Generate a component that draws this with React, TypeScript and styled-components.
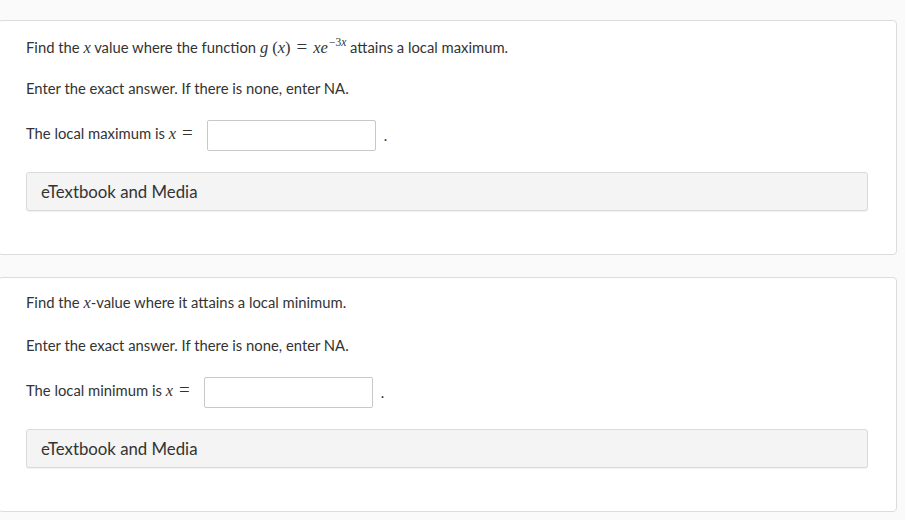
import styled, { createGlobalStyle } from "styled-components";

const Global = createGlobalStyle`
  html, body {
    margin: 0;
    padding: 0;
    background: #fafafa;
  }
  body {
    font-family: Lato, "Open Sans", sans-serif;
    color: #333;
  }
`;

const Page = styled.div`
  display: flex;
  flex-direction: column;
  gap: 22px;
  padding: 20px 8px 0 0;
`;

const Card = styled.section`
  background: #fff;
  border: 1px solid #dcdcdc;
  border-radius: 4px;
  margin-left: -2px;
  padding: 14px 28px 43px 27px;
  display: flex;
  flex-direction: column;
`;

const Line = styled.p<{ $shift?: number }>`
  margin: 0 0 22px;
  font-size: 14.8px;
  line-height: 20px;
  padding-top: ${(p) => p.$shift ?? 0}px;
  &:first-child {
    margin-bottom: ${(p) => 23 - (p.$shift ?? 0)}px;
  }
`;

const M = styled.span<{ $upright?: boolean }>`
  font-family: "Liberation Serif", "Times New Roman", serif;
  font-style: ${(p) => (p.$upright ? "normal" : "italic")};
  font-size: 16.5px;
  line-height: 1;
`;

const Op = styled.span`
  font-family: "Liberation Serif", "Times New Roman", serif;
  font-size: 19px;
  line-height: 1;
  margin: 0 6px;
`;

const Sup = styled.sup`
  font-family: "Liberation Serif", "Times New Roman", serif;
  font-size: 11.5px;
  line-height: 0;
  vertical-align: 7px;
  margin-left: 1px;
  i {
    font-style: italic;
  }
`;

const AnswerRow = styled.div`
  display: flex;
  align-items: flex-start;
  margin-bottom: 21px;
  font-size: 14.8px;
  line-height: 20px;
`;

const Label = styled.span`
  margin-top: 3px;
  white-space: pre;
`;

const Field = styled.input`
  box-sizing: border-box;
  width: 169px;
  height: 31px;
  margin-left: 8px;
  border: 1px solid #c8c8c8;
  border-radius: 2px;
  background: #fff;
  outline: none;
`;

const Dot = styled.span`
  margin-left: 8px;
  margin-top: 5px;
`;

const Media = styled.div`
  box-sizing: border-box;
  height: 39px;
  display: flex;
  align-items: center;
  padding: 0 14px;
  background: #f4f4f4;
  border: 1px solid #dadada;
  border-radius: 3px;
  box-shadow: 0 1px 1px rgba(0, 0, 0, 0.06);
  font-size: 16.8px;
  color: #333;
`;

function Answer({ kind }: { kind: string }) {
  return (
    <AnswerRow>
      <Label>
        The local {kind} is <M>x</M>
        <Op>=</Op>
      </Label>
      <Field />
      <Dot>.</Dot>
    </AnswerRow>
  );
}

export default function App() {
  return (
    <>
      <Global />
      <Page>
        <Card>
          <Line $shift={2}>
            Find the <M>x</M> value where the function <M>g</M>
            <M $upright> (</M>
            <M>x</M>
            <M $upright>)</M>
            <Op>=</Op>
            <M>xe</M>
            <Sup>
              −3<i>x</i>
            </Sup>{" "}
            attains a local maximum.
          </Line>
          <Line>Enter the exact answer. If there is none, enter NA.</Line>
          <Answer kind="maximum" />
          <Media>eTextbook and Media</Media>
        </Card>
        <Card>
          <Line>
            Find the <M>x</M>-value where it attains a local minimum.
          </Line>
          <Line>Enter the exact answer. If there is none, enter NA.</Line>
          <Answer kind="minimum" />
          <Media>eTextbook and Media</Media>
        </Card>
      </Page>
    </>
  );
}
